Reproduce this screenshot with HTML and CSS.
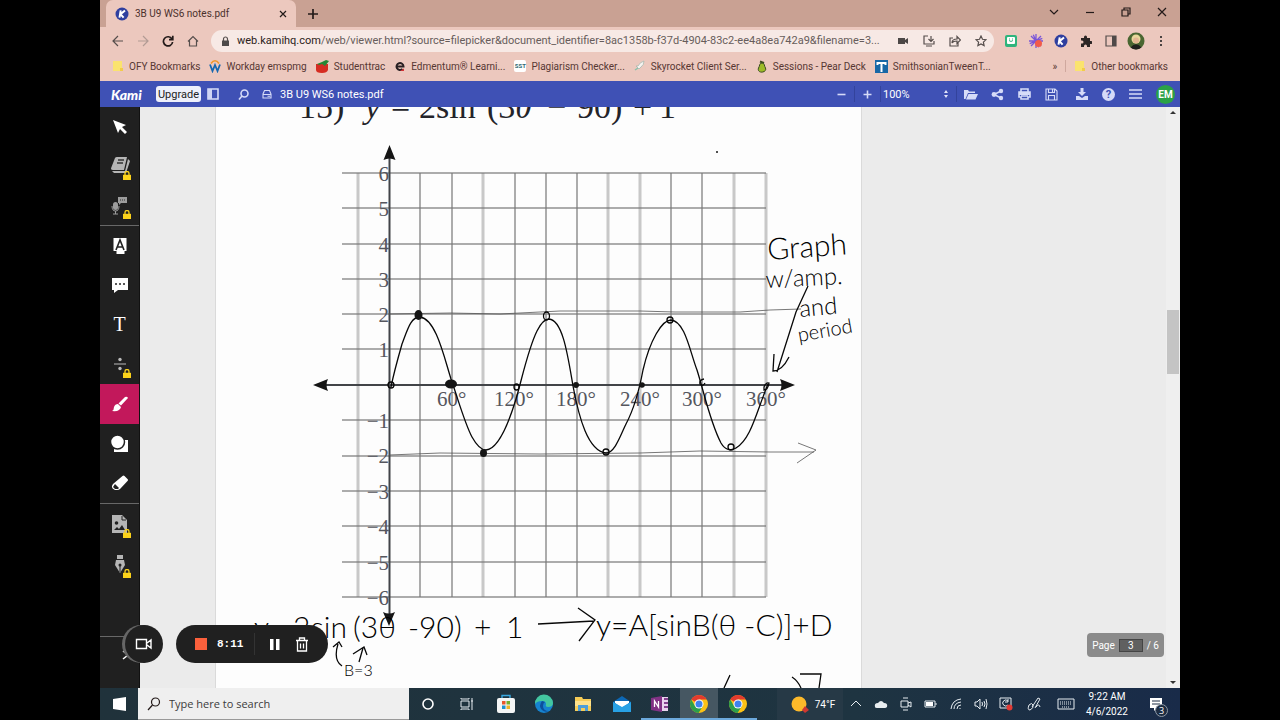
FILE: index.html
```html
<!DOCTYPE html>
<html lang="en">
<head>
<meta charset="utf-8">
<title>3B U9 WS6 notes.pdf</title>
<link rel="stylesheet" href="styles.css">
</head>
<body>
<svg class="defs" aria-hidden="true">
  <symbol id="lock" viewBox="0 0 8 9"><path d="M2 4V2.5a2 2 0 0 1 4 0V4" fill="none" stroke="#fbd21b" stroke-width="1.3"/><path d="M0 3.8h8V9H0z" fill="#fbd21b"/></symbol>
  <symbol id="kami" viewBox="0 0 14 14"><circle cx="7" cy="7" r="6.5" fill="#2f3f9f"/><path d="M5.7 3.3 4.5 10.7M10 3.5 5.5 7.2 8.6 10.6" fill="none" stroke="#fff" stroke-width="2"/></symbol>
  <symbol id="folder" viewBox="0 0 12 12"><path d="M1 1h9v7l1 3H1z" fill="#fbe36e"/><path d="M8 11V8h3v3z" fill="#f2cc4a"/></symbol>
  <symbol id="chrome" viewBox="0 0 20 20"><circle cx="10" cy="10" r="9" fill="#fbc116"/><path d="M10 10 2.2 5.5A9 9 0 0 1 17.8 5.5H10z" fill="#e33b2e"/><path d="M2.2 5.5A9 9 0 0 0 9.5 19L14 12 10 10 6 12z" fill="#2c9f4b"/><circle cx="10" cy="10" r="4.5" fill="#fff"/><circle cx="10" cy="10" r="3.5" fill="#3f82ee"/></symbol>
</svg>
<div class="screen">
  <header class="tabstrip">
    <div class="tab">
      <svg width="14" height="14"><use href="#kami"/></svg>
      <span class="tab-title">3B U9 WS6 notes.pdf</span>
      <button class="tab-close" aria-label="Close tab"><svg width="8" height="8" viewBox="0 0 8 8"><path d="M1 1l6 6M7 1 1 7" class="ln"/></svg></button>
    </div>
    <button class="newtab" aria-label="New tab"><svg width="12" height="12" viewBox="0 0 12 12"><path d="M6 1v10M1 6h10" class="ln thick"/></svg></button>
    <div class="winctl">
      <button aria-label="Search tabs"><svg width="10" height="10" viewBox="0 0 10 10"><path d="M1 3l4 4 4-4" class="ln"/></svg></button>
      <button aria-label="Minimize"><svg width="10" height="10" viewBox="0 0 10 10"><path d="M1 5.5h8" class="ln"/></svg></button>
      <button aria-label="Restore"><svg width="10" height="10" viewBox="0 0 10 10"><path d="M1 3h6v6H1zM3 3V1h6v6H7" class="ln"/></svg></button>
      <button aria-label="Close"><svg width="10" height="10" viewBox="0 0 10 10"><path d="M1 1l8 8M9 1 1 9" class="ln"/></svg></button>
    </div>
  </header>

  <nav class="toolbar">
    <div class="navbtns">
      <button aria-label="Back"><svg width="12" height="12" viewBox="0 0 12 12"><path d="M11 6H1M6 1 1 6l5 5" class="ln gray"/></svg></button>
      <button aria-label="Forward"><svg width="12" height="12" viewBox="0 0 12 12"><path d="M1 6h10M6 1l5 5-5 5" class="ln faded"/></svg></button>
      <button aria-label="Reload"><svg width="12" height="12" viewBox="0 0 12 12"><path d="M10 4A4.6 4.6 0 1 0 10.6 7M10.8.8V4.6H7" class="ln thick"/></svg></button>
      <button aria-label="Home"><svg width="12" height="12" viewBox="0 0 12 12"><path d="M1 6.5 6 1.5l5 5M2.500 5.500V11h7V5.500" class="ln gray"/></svg></button>
    </div>
    <div class="omnibox">
      <svg class="padlock" width="9" height="11" viewBox="0 0 9 11"><path d="M2.500 5V3a2 2 0 0 1 4 0v2" class="ln gray"/><path d="M1 4.500h7V10H1z" fill="#4d4a49"/></svg>
      <a class="url" href="#"><span class="host">web.kamihq.com</span>/web/viewer.html?source=filepicker&amp;document_identifier=8ac1358b-f37d-4904-83c2-ee4a8ea742a9&amp;filename=3...</a>
      <div class="omni-actions">
        <button aria-label="Camera"><svg width="12" height="10" viewBox="0 0 12 10"><path d="M1 2h7v2l3-2v6L8 6v2H1z" fill="#4c4746"/></svg></button>
        <button aria-label="Install"><svg width="12" height="12" viewBox="0 0 12 12"><path d="M5 1H1v8h10V6M3 11h6M8 1v5M5.500 4 8 6.500 10.500 4" class="ln gray"/></svg></button>
        <button aria-label="Share"><svg width="12" height="12" viewBox="0 0 12 12"><path d="M4 3H1v8h8V8M3 8c0-3 2-4 5-4V1.500L11.500 5 8 8.500V6C6 6 4 6 3 8z" class="ln gray"/></svg></button>
        <button aria-label="Bookmark"><svg width="12" height="12" viewBox="0 0 12 12"><path d="M6 1l1.500 3.300 3.500.4-2.600 2.400.7 3.500L6 8.900 2.900 10.600l.7-3.500L1 4.700l3.500-.4z" class="ln gray"/></svg></button>
      </div>
    </div>
    <div class="exts">
      <button aria-label="Bitmoji"><svg width="14" height="14" viewBox="0 0 14 14"><rect x="1" y="1" width="12" height="12" rx="2" fill="#2fb47c"/><rect x="3" y="3" width="8" height="7" rx="1" fill="#fff"/><path d="M5 6.500q2 2 4 0M5.500 4.500v1M8.500 4.500v1" fill="none" stroke="#2fb47c"/></svg></button>
      <button aria-label="Loom"><svg width="14" height="14" viewBox="0 0 14 14"><path d="M7 0v14M0 7h14M2 2l10 10M12 2 2 12M4.300.7l5.400 12.600M.7 9.700l12.600-5.400" stroke="#7a55d8" stroke-width="1.300"/><circle cx="9.500" cy="9.500" r="3.500" fill="#f25a49"/></svg></button>
      <button aria-label="Kami extension"><svg width="14" height="14"><use href="#kami"/></svg></button>
      <button aria-label="Extensions"><svg width="12" height="12" viewBox="0 0 12 12"><path d="M1 3h3V2a1.500 1.500 0 0 1 3 0v1h3v3h1a1.500 1.500 0 0 1 0 3h-1v3H7v-1a1.500 1.500 0 0 0-3 0v1H1V8.500h1a1.500 1.500 0 0 0 0-3H1z" fill="#2c2524"/></svg></button>
      <button aria-label="Side panel"><svg width="12" height="12" viewBox="0 0 12 12"><path d="M1 1h10v10H1z" class="ln gray"/><path d="M7 1h4v10H7z" fill="#4f4948"/></svg></button>
      <button aria-label="Profile"><svg width="18" height="18" viewBox="0 0 18 18"><circle cx="9" cy="9" r="8.500" fill="#4a6631"/><path d="M3.500 15.500Q9 9 14.500 15.500A8.500 8.500 0 0 1 3.500 15.500" fill="#20211d"/><circle cx="9" cy="7" r="4.500" fill="#e8d79b"/><circle cx="9" cy="8.500" r="3" fill="#e3b592"/></svg></button>
      <button aria-label="Menu"><svg width="4" height="12" viewBox="0 0 4 12"><path d="M1 1h2v2H1zM1 5h2v2H1zM1 9h2v2H1z" fill="#4b4342"/></svg></button>
    </div>
  </nav>

  <nav class="bookmarks">
    <a href="#"><svg width="12" height="12"><use href="#folder"/></svg>OFY Bookmarks</a>
    <a href="#"><svg width="12" height="14" viewBox="0 0 12 14"><path d="M2 4.500Q6-1 10 4.500" fill="none" stroke="#f2982b" stroke-width="1.600"/><path d="M1 5.500 3.500 12 6 6l2.500 6L11 5.500" fill="none" stroke="#1768b0" stroke-width="1.800"/></svg>Workday emspmg</a>
    <a href="#"><svg width="13" height="13" viewBox="0 0 13 13"><path d="M0 4h12v6q-1 3-6 3-6 0-6-3z" fill="#d62c22"/><path d="M1 4 6 2 10 0l3 1-4 5-3-2-3 1z" fill="#268734"/></svg>Studenttrac</a>
    <a href="#"><svg width="12" height="12" viewBox="0 0 12 12"><path d="M2.500 6.500H9.500A3.500 3.500 0 1 0 8.500 9" fill="none" stroke="#292023" stroke-width="2"/><path d="M6 11h4V8.500z" fill="#d43235"/></svg>Edmentum® Learni...</a>
    <a href="#"><span class="sst">SST</span>Plagiarism Checker...</a>
    <a href="#"><svg width="12" height="12" viewBox="0 0 12 12"><path d="M4 6q2-4 6-5 0 4-3 6l-2 2-3-3z" fill="#f6f3f0" stroke="#a8b8ae" stroke-width=".8"/><path d="M1 10l3-2" stroke="#8bc2ac" stroke-width="1.500"/></svg>Skyrocket Client Ser...</a>
    <a href="#"><svg width="12" height="13" viewBox="0 0 12 13"><path d="M4 1.500l4 1.500" stroke="#3c4b20" stroke-width="2"/><path d="M6 3c3 0 2 3 3.500 5 2 5-9 6-7 0C4 6 3 3 6 3z" fill="#9dbb28" stroke="#3c4b20"/></svg>Sessions - Pear Deck</a>
    <a href="#"><svg width="13" height="13" viewBox="0 0 13 13"><path d="M0 0h13v13H0z" fill="#1767a6"/><path d="M2 3h9M6.500 3v9M2.500 2v3M10.500 2v3" stroke="#fff" stroke-width="2"/></svg>SmithsonianTweenT...</a>
    <div class="bookmarks-end"><button aria-label="More bookmarks">»</button><a href="#"><svg width="12" height="12"><use href="#folder"/></svg>Other bookmarks</a></div>
  </nav>

  <header class="kamibar">
    <a class="brand" href="#">Kami</a>
    <button class="upgrade">Upgrade</button>
    <button class="panel" aria-label="Toggle panel"><svg width="12" height="12" viewBox="0 0 12 12"><path d="M1 1h10v10H1z" class="kln"/><path d="M1 1h4v10H1z" fill="#cfd5f5"/></svg></button>
    <button class="find" aria-label="Find"><svg width="11" height="11" viewBox="0 0 11 11"><circle cx="6.500" cy="4.500" r="3.500" class="kln"/><path d="M4 7 1 10.500" class="kln"/></svg></button>
    <div class="doc"><svg width="10" height="10" viewBox="0 0 10 10"><path d="M1 5 2.500 1.500h5L9 5v4H1zM1 5.500h8M5.500 7.300H8" class="kln thin"/></svg><span>3B U9 WS6 notes.pdf</span></div>
    <div class="zoomctl">
      <button aria-label="Zoom out"><svg width="9" height="9" viewBox="0 0 9 9"><path d="M.5 4.500h8" class="kln"/></svg></button>
      <button aria-label="Zoom in"><svg width="9" height="9" viewBox="0 0 9 9"><path d="M.5 4.500h8M4.500.5v8" class="kln"/></svg></button>
      <label class="level"><select aria-label="Zoom level"><option>100%</option></select><svg width="6" height="8" viewBox="0 0 6 8"><path d="M3 0l2 3H1zM3 8l2-3H1z" fill="#e2e5fa"/></svg></label>
    </div>
    <div class="kactions">
      <button aria-label="Open"><svg width="16" height="13" viewBox="0 0 16 13"><path d="M1 11V2h4l1 1.500h6V5H5L2.500 11zM5.500 6H15l-2.500 5.500H3z" fill="#d6dbf8"/></svg></button>
      <button aria-label="Share"><svg width="13" height="13" viewBox="0 0 13 13"><path d="M10 3 3 6.500 10 10" class="kln"/><g fill="#d6dbf8"><circle cx="10" cy="3" r="2.200"/><circle cx="3" cy="6.500" r="2.400"/><circle cx="10" cy="10" r="2.200"/></g></svg></button>
      <button aria-label="Print"><svg width="13" height="12" viewBox="0 0 13 12"><path d="M3 4V1h7v3M1 9V4h11v5h-2v2H3V9zM3 8h7" class="kln"/><path d="M1 4h11v3H1z" fill="#d6dbf8"/></svg></button>
      <button aria-label="Save"><svg width="13" height="13" viewBox="0 0 13 13"><path d="M1 1h9l2 2v9H1zM3.500 1v3.500h6V1M3.500 12V7.500h6V12M7.500 1.500V4" class="kln thin"/></svg></button>
      <button class="spaced" aria-label="Download"><svg width="14" height="13" viewBox="0 0 14 13"><path d="M5.500 0h3v4H11L7 8 3 4h2.500zM1 8h3l3 2 3-2h3v4H1z" fill="#d6dbf8"/></svg></button>
      <button aria-label="Help"><span class="help">?</span></button>
      <button aria-label="Menu"><svg width="13" height="12" viewBox="0 0 13 12"><path d="M0 2h13M0 6h13M0 10h13" class="kln"/></svg></button>
    </div>
    <button class="avatar">EM</button>
  </header>

  <main class="viewer">
    <aside class="tools">
      <div class="group three">
        <button aria-label="Select"><svg width="16" height="16" viewBox="0 0 16 16"><path d="M1 1l13 5-4 2 5 5-2 2-5-5-2 4z" fill="#fff"/></svg></button>
        <button aria-label="Dictionary" class="locked"><svg width="20" height="19" viewBox="0 0 20 19"><path d="M5 2q.5-1 2-1h10l-3 13H3Q0 14 1.500 11zM18 3l2 2-4 12H4l-2-2h13z" fill="#b5b5b5"/><path d="M8 4h6M7 7h6" stroke="#333" stroke-width="1.300"/></svg><svg class="lk"><use href="#lock"/></svg></button>
        <button aria-label="Speech" class="locked"><svg width="18" height="20" viewBox="0 0 18 20"><rect x="2" y="7" width="5" height="8" rx="2.500" fill="#9d9d9d"/><path d="M1 11q0 5 3.500 5T8 11M4.500 16v3M2 19h5" stroke="#9d9d9d" fill="none"/><path d="M7 2h9v6h-6l-2 2V8H7z" fill="#9d9d9d"/><path d="M9 5h6" stroke="#333" stroke-dasharray="1 1"/></svg><svg class="lk"><use href="#lock"/></svg></button>
      </div>
      <div class="group seven">
        <button aria-label="Markup"><svg width="16" height="18" viewBox="0 0 16 18"><path d="M1.500 1h13v13h-2v3h-8v-3h-3z" fill="#fff"/><path d="M4 13 8 3l4 10M5.500 10h5" stroke="#222" fill="none" stroke-width="1.600"/></svg></button>
        <button aria-label="Comment"><svg width="18" height="16" viewBox="0 0 18 16"><path d="M1 1h16v12H7l-4 3v-3H1z" fill="#fff"/><path d="M4 7h2M8 7h2M12 7h2" stroke="#222" stroke-width="1.300"/></svg></button>
        <button aria-label="Text" class="tee">T</button>
        <button aria-label="Equation" class="locked"><svg width="14" height="16" viewBox="0 0 14 16"><path d="M1 8h12" stroke="#bbb"/><circle cx="7" cy="3.500" r="1.700" fill="#bbb"/><circle cx="7" cy="12.500" r="1.700" fill="#bbb"/></svg><svg class="lk"><use href="#lock"/></svg></button>
        <button aria-label="Drawing" class="on"><svg width="18" height="18" viewBox="0 0 18 18"><path d="M7.500 8.500 14 2q2-1 3 1L10 10.500" fill="#fff"/><path d="M7 9l3 3q-1 5-9 4 2-1 2-4 1-3 4-3z" fill="#fff"/></svg></button>
        <button aria-label="Shapes"><svg width="19" height="18" viewBox="0 0 19 18"><path d="M4 5h14v12H4z" fill="#fff"/><circle cx="7.500" cy="7" r="7" fill="#fff" stroke="#222" stroke-width="1.500"/></svg></button>
        <button aria-label="Eraser"><svg width="18" height="16" viewBox="0 0 18 16"><path d="M11.500 1q1-1 2 0l3 3q1 1 0 2L9 14q-1 1-3 1H4q-5-2-2-6z" fill="#fff"/><path d="M4 9l4 4-1 1H4l-2-2z" fill="#222"/></svg></button>
      </div>
      <div class="group rest">
        <button aria-label="Media" class="locked"><svg width="17" height="20" viewBox="0 0 17 20"><path d="M1 1h10l5 5v13H1z" fill="#b5b5b5"/><circle cx="5.500" cy="9" r="1.800" fill="#222"/><path d="M3 16l3-3 2 2 3-4 3 5z" fill="#222"/><path d="M11 2v4h4" stroke="#222" fill="none"/></svg><svg class="lk"><use href="#lock"/></svg></button>
        <button aria-label="Signature" class="locked"><svg width="12" height="20" viewBox="0 0 12 20"><path d="M3 1h6v4H3zM2 6h8l1 5-5 8-5-8z" fill="#b5b5b5"/><circle cx="6" cy="11" r="1.500" fill="#222"/><path d="M6 12v6" stroke="#222"/></svg><svg class="lk"><use href="#lock"/></svg></button>
      </div>
      <button class="expand" aria-label="Expand"><svg width="8" height="10" viewBox="0 0 8 10"><path d="M1 1l5 4-5 4" fill="none" stroke="#fff" stroke-width="1.500"/></svg></button>
    </aside>

    <section class="desk">
      <article class="sheet">
        <svg class="ink" viewBox="216 107 645 581" preserveAspectRatio="xMinYMin slice">
          <g class="print">
            <text y="118"><tspan x="299">15)</tspan><tspan x="365" class="it">y</tspan><tspan x="391">=</tspan><tspan x="419">2sin</tspan><tspan x="487">(3</tspan><tspan class="it">θ</tspan><tspan x="547">−</tspan><tspan x="577">90)</tspan><tspan x="633">+</tspan><tspan x="659">1</tspan></text>
          </g>
          <g class="grid">
            <path d="M342 173H766M342 208H766M342 244H766M342 279H766M342 314H766M342 349H766M342 420H766M342 456H766M342 491H766M342 526H766M342 562H766M342 597H766"/>
            <path d="M420 173V597M452 173V597M515 173V597M546 173V597M577 173V597M671 173V597M702 173V597"/>
            <path class="wide" d="M358 173V597M483 173V597M608 173V597M640 173V597M734 173V597M766 173V597"/>
          </g>
          <g class="scale end">
            <text x="389" y="181">6</text><text x="389" y="216">5</text><text x="389" y="252">4</text><text x="389" y="287">3</text><text x="389" y="322">2</text><text x="389" y="357">1</text>
            <text x="389" y="428">−1</text><text x="389" y="463">−2</text><text x="389" y="499">−3</text><text x="389" y="534">−4</text><text x="389" y="570">−5</text><text x="389" y="605">−6</text>
          </g>
          <g class="scale">
            <text x="437" y="406">60°</text><text x="494" y="406">120°</text><text x="556" y="406">180°</text><text x="620" y="406">240°</text><text x="682" y="406">300°</text><text x="746" y="406">360°</text>
          </g>
          <path class="axis" d="M389.500 156V620M326 385H784"/>
          <path class="tips" d="M389.500 145l-6 15q6-3 12 0zM389 626l-6-14q6 3 12 0zM313 385l15-6q-3 6 0 12zM795 385l-15-6q3 6 0 12z"/>
          <path class="faint" d="M389 314 450 313 500 314 560 311 640 311 675 312 740 312 770 310 801 309M389 455 440 453 540 454 640 453 700 451 770 452 814 452M798 443l18 7-19 13"/>
          <path class="pen" d="M391 387C394 372 398 358 402 344 408 328 411 317 420 317 436 319 444 357 451 379 459 402 465 424 472 437 477 446 481 450 486 450 498 449 509 422 516 399 522 379 528 349 537 331 541 323 545 319 549 319 563 320 568 357 573 386 579 418 588 451 606 453 615 453 621 434 626 424 635 407 640 386 643 370 650 340 662 320 671 320 685 321 690 352 697 370 704 392 710 422 721 443 725 450 731 451 736 448 751 439 756 413 768 384"/>
          <g class="dots"><ellipse cx="418.500" cy="315" rx="4" ry="5"/><ellipse cx="451" cy="384" rx="6" ry="4.500"/><ellipse cx="483.500" cy="453" rx="3.500" ry="4"/><circle cx="576" cy="385" r="3"/><circle cx="642" cy="385" r="2.800"/><circle cx="717" cy="152" r="1"/></g>
          <path class="pen" d="M388 385a3 3 0 1 0 6 0a3 3 0 1 0-6 0M543.500 316a3 4 0 1 0 6 0a3 4 0 1 0-6 0M514 387a2.500 3 0 1 0 5 0a2.500 3 0 1 0-5 0M603 452a3 3 0 1 0 6 0a3 3 0 1 0-6 0M667 320a3 3 0 1 0 6 0a3 3 0 1 0-6 0M704 379q-5 1-4 5 3 3 5-1M728 447a3 3 0 1 0 6 0a3 3 0 1 0-6 0M764 387q2-5 5-4-1 7-5 7z"/>
          <g class="hand">
            <text x="768" y="260" class="h30" transform="rotate(-4 768 260)">Graph</text>
            <text x="766" y="288" class="h24" transform="rotate(-3 766 288)">w/amp.</text>
            <text x="800" y="317" class="h24" transform="rotate(-5 800 317)">and</text>
            <text x="799" y="342" class="h20" transform="rotate(-10 799 342)">period</text>
            <text y="638" class="h30"><tspan x="254">y</tspan><tspan x="272">=</tspan><tspan x="293">2</tspan><tspan x="311">sin</tspan><tspan x="353">(3θ</tspan><tspan x="408">-90)</tspan><tspan x="474">+</tspan><tspan x="506">1</tspan></text>
            <text x="596" y="636" class="h30">y=A[sinB(θ -C)]+D</text>
            <text x="344" y="676" class="h16">B=3</text>
          </g>
          <path class="pen" d="M808 286 796 312 777 372M774 354l-1 17q9 0 16-14M538 624l56-3M578 608l17 12-16 21M342 666q-9-6-4-22M333 647l6-5 3 5M359 662l4-14M353 654l11-7 3 8M730 675l-6 13M792 677q6 4 9 11M800 674h21l-2 14"/>
        </svg>
      </article>
      <form class="pager"><label for="pageno">Page</label><input id="pageno" type="text" value="3"><span>/ 6</span></form>
    </section>
    <div class="scroll"><i class="up"></i><i class="thumb"></i><i class="down"></i></div>
  </main>

  <div class="recorder">
    <button class="cam" aria-label="Camera"><svg width="18" height="14" viewBox="0 0 18 14"><path d="M1.500 2.500h10v9h-10zM12 6l4-3v8l-4-3" fill="none" stroke="#fff" stroke-width="1.400"/></svg></button>
    <div class="pill">
      <button class="stop" aria-label="Stop"><i></i></button><time>8:11</time>
      <button class="pause" aria-label="Pause"><svg width="10" height="11" viewBox="0 0 10 11"><path d="M0 0h3.500v11H0zM6 0h3.500v11H6z" fill="#fff"/></svg></button>
      <button aria-label="Delete"><svg width="14" height="15" viewBox="0 0 14 15"><path d="M1 3.500h12M4.500 3V1h5v2M2.500 4v10h9V4M5.500 6.500v5M8.500 6.500v5" fill="none" stroke="#fff" stroke-width="1.300"/></svg></button>
    </div>
  </div>

  <footer class="taskbar">
    <button class="start" aria-label="Start"><svg width="13" height="14" viewBox="0 0 13 14"><path d="M0 2 13 0v14L0 12z" fill="#fff"/></svg></button>
    <label class="search"><svg width="14" height="14" viewBox="0 0 14 14"><circle cx="8.500" cy="5" r="4" class="ln"/><path d="M5.500 8 1 13" class="ln"/></svg><input type="text" placeholder="Type here to search"></label>
    <div class="apps">
      <button aria-label="Cortana"><svg width="14" height="14" viewBox="0 0 14 14"><circle cx="7" cy="7" r="5" fill="none" stroke="#fff" stroke-width="1.600"/></svg></button>
      <button aria-label="Task view"><svg width="14" height="14" viewBox="0 0 14 14"><path d="M1 4h8v6H1zM1 1v1h8V1M1 13v-1h8v1M12 1v12M11 4h2" class="tl"/></svg></button>
      <button aria-label="Store"><svg width="20" height="20" viewBox="0 0 20 20"><path d="M6 4V1.500h8V4" fill="none" stroke="#39a8e0" stroke-width="1.400"/><rect x="1" y="4" width="18" height="15" rx="2" fill="#f4f5f5"/><path d="M6 7h3.500v3.500H6z" fill="#e9552b"/><path d="M10.500 7H14v3.500h-3.500z" fill="#75ad2f"/><path d="M6 11.500h3.500V15H6z" fill="#1e8fd0"/><path d="M10.500 11.500H14V15h-3.500z" fill="#efb52b"/></svg></button>
      <button aria-label="Edge"><svg width="20" height="20" viewBox="0 0 20 20"><circle cx="10" cy="10" r="9" fill="#1683cf"/><path d="M1 10A9 9 0 0 1 19 9q0 4-5 4-3 0-2-3 0-3-4-3-5 0-7 3" fill="#43c6a0"/><path d="M8 7q-4 5 0 9 3 3 7 1-6 0-6-5 0-3 2-4z" fill="#0d4f9c"/></svg></button>
      <button aria-label="File Explorer"><svg width="18" height="16" viewBox="0 0 18 16"><path d="M1 1h7l1 2h8v12H1z" fill="#f6cc57"/><path d="M1 5h16v5H1z" fill="#fde18b"/><path d="M4 15V9h10v6h-3v-3H7v3z" fill="#4d9ed8"/></svg></button>
      <button aria-label="Mail"><svg width="20" height="18" viewBox="0 0 20 18"><path d="M1 7 10 1l9 6v10H1z" fill="#0d68b5"/><path d="M3 6h14v2l-7 5-7-5z" fill="#fff"/><path d="M1 7l9 5 9-5v10H1z" fill="#28a1e5"/></svg></button>
      <button class="open" aria-label="OneNote"><svg width="18" height="16" viewBox="0 0 18 16"><path d="M8 1h9v14H8z" fill="#e9d4ee"/><path d="M13 3h4M13 7h4M13 11h4" stroke="#85418f" stroke-width="2"/><path d="M0 2 11 0v16L0 14z" fill="#813284"/><path d="M3.500 11V5l4 6V5" fill="none" stroke="#fff" stroke-width="1.300"/></svg></button>
      <button class="open active" aria-label="Chrome"><svg width="20" height="20"><use href="#chrome"/></svg></button>
      <button class="open" aria-label="Chrome second profile"><svg width="20" height="20"><use href="#chrome"/></svg></button>
    </div>
    <button class="weather"><svg width="18" height="18" viewBox="0 0 18 18"><circle cx="8" cy="9" r="7.500" fill="#fdb92a"/><path d="M14 11l4 4-4 3-3-3z" fill="#ce3731"/></svg>74°F</button>
    <div class="tray">
      <button aria-label="Hidden icons"><svg width="12" height="12" viewBox="0 0 12 12"><path d="M1 8l5-5 5 5" class="tl"/></svg></button>
      <button aria-label="OneDrive"><svg width="14" height="10" viewBox="0 0 14 10"><path d="M1 8q-1-4 3-4 3-4 6 0 4 0 3 4-1 1-2 1H3Q1 9 1 8z" fill="#e8edf0"/></svg></button>
      <button aria-label="Meet now"><svg width="12" height="14" viewBox="0 0 12 14"><path d="M1 4h7v6H1zM8 6l3-1v5L8 8M3 1h5M3 13h5" class="tl"/></svg></button>
      <button aria-label="Battery"><svg width="13" height="10" viewBox="0 0 13 10"><path d="M1 2h10v6H1zM12 4v2" class="tl"/><path d="M2 3h7v4H2z" fill="#fff"/></svg></button>
      <button aria-label="Wi-Fi"><svg width="12" height="12" viewBox="0 0 12 12"><path d="M1 11Q2 2 11 1M4 11q0-6 7-7M7 11q0-4 4-4M10 11v-1" class="tl"/></svg></button>
      <button aria-label="Volume"><svg width="14" height="12" viewBox="0 0 14 12"><path d="M1 4h2l3-3v10L3 8H1zM8 4q1 2 0 4M10 3q2 3 0 6M12 1q2 5 0 10" class="tl"/></svg></button>
      <button aria-label="Update"><svg width="14" height="14" viewBox="0 0 14 14"><path d="M1 1h11v10H1zM9 4a3 3 0 1 0 0 4M9 2v3H6" class="tl"/><circle cx="10.500" cy="10.500" r="3" fill="#e23b35"/></svg></button>
      <button class="pen-btn" aria-label="Pen"><svg width="14" height="14" viewBox="0 0 14 14"><path d="M2 8q3-3 4 0t-3 5q-3 0-1-5M5 10l6-9 2 1-5 9M9 10q3-4 4 0" class="tl"/></svg></button>
      <button class="kbd" aria-label="Keyboard"><svg width="18" height="12" viewBox="0 0 18 12"><path d="M1 1h16v10H1z" class="tl"/><path d="M3 4h12M3 6h12M5 9h8" class="tl" stroke-dasharray="1 1"/></svg></button>
    </div>
    <div class="clock"><time>9:22 AM</time><time>4/6/2022</time></div>
    <button class="notes" aria-label="3 notifications"><svg width="14" height="14" viewBox="0 0 14 14"><path d="M1 1h12v10H8l-3 3v-3H1z" fill="#fff"/><path d="M3 4h8M3 7h8" stroke="#1a2c45"/></svg><span>3</span></button>
  </footer>
</div>
</body>
</html>
```
FILE: styles.css
```css
* { box-sizing: border-box; }
body { margin: 0; background: #000; font-family: "Open Sans", "Noto Sans", sans-serif; font-size: 11px; }
button { margin: 0; padding: 0; border: 0; background: none; font: inherit; color: inherit; display: flex; align-items: center; justify-content: center; }
a { color: inherit; text-decoration: none; }
svg { display: block; flex: none; }
.defs { position: absolute; width: 0; height: 0; }
.ln { fill: none; stroke: #231a19; stroke-width: 1.2; }
.ln.thick { stroke-width: 1.7; }
.ln.gray { stroke: #564e4c; }
.ln.faded { stroke: #b29b94; }
.kln { fill: none; stroke: #d6dbf8; stroke-width: 1.6; }
.kln.thin { stroke-width: 1.1; }
.tl { fill: none; stroke: #e6ecf0; stroke-width: 1; }
.screen { position: relative; margin: 0 100px; height: 100vh; display: flex; flex-direction: column; overflow: hidden; }

.tabstrip { flex: 0 0 27px; display: flex; align-items: stretch; background: #c9a193; padding-left: 6px; }
.tab { flex: 0 0 190px; display: flex; align-items: center; gap: 6px; padding: 0 9px; background: #ecc8be; border-radius: 7px 7px 0 0; color: #4b302c; }
.tab-title { flex: 1; white-space: nowrap; font: 10px Roboto, sans-serif; }
.newtab { width: 34px; }
.winctl { margin-left: auto; display: flex; }
.winctl button { width: 36px; padding-bottom: 4px; }

.toolbar { flex: 0 0 28px; display: flex; align-items: center; background: #ecc8be; padding: 0 7px 0 5px; }
.navbtns { display: flex; margin-right: 6px; }
.navbtns button, .exts button { width: 25px; height: 24px; }
.omnibox { flex: 1; min-width: 0; height: 22px; display: flex; align-items: center; background: #f7e9e5; border-radius: 11px; padding-left: 10px; }
.url { flex: 1; min-width: 0; margin-left: 7px; white-space: nowrap; font: 11px/18px Roboto, sans-serif; color: #675d5b; }
.host { color: #2b2220; }
.omni-actions { display: flex; }
.omni-actions button { width: 26px; height: 22px; }
.exts { display: flex; margin-left: 4px; }

.bookmarks { flex: 0 0 26px; display: flex; align-items: center; gap: 9px; background: #ecc8be; padding: 0 12px 4px; font: 10px Roboto, sans-serif; color: #573733; white-space: nowrap; }
.bookmarks a { display: flex; align-items: center; gap: 5px; }
.bookmarks-end { margin-left: auto; display: flex; align-items: center; gap: 8px; }
.bookmarks-end a { border-left: 1px solid #cfa89e; padding-left: 8px; }
.sst { width: 12px; height: 12px; line-height: 12px; background: #fff; border-radius: 2px; font-size: 6px; font-weight: bold; text-align: center; color: #2e6a73; }

.kamibar { flex: 0 0 26px; display: flex; align-items: center; background: #3f51b5; color: #fff; padding: 0 5px 0 11px; font-family: Roboto, "Noto Sans", sans-serif; }
.brand { flex: 0 0 45px; font: italic 900 14px Lato, sans-serif; }
.upgrade { width: 45px; height: 16px; border-radius: 3px; background: #eef0fb; color: #222; }
.panel { width: 24px; }
.find { width: 37px; }
.doc { display: flex; align-items: center; gap: 8px; white-space: nowrap; }
.zoomctl { margin-left: auto; display: flex; height: 16px; }
.zoomctl button { width: 26px; border-right: 1px solid #33439c; }
.level { width: 76px; display: flex; align-items: center; padding: 0 7px 0 2px; border-right: 1px solid #33439c; }
.level select { flex: 1; min-width: 0; appearance: none; border: 0; padding: 0; background: none; color: #fff; font: 11px Roboto, sans-serif; }
.kactions { display: flex; }
.kactions button { width: 27px; height: 22px; }
.kactions .spaced { margin-left: 3px; }
.help { width: 13px; height: 13px; line-height: 13px; border-radius: 50%; background: #d6dbf8; color: #3f51b5; font-weight: bold; }
.avatar { width: 19px; height: 19px; margin-left: 7px; border-radius: 50%; background: #2aa147; font-weight: bold; font-size: 10px; }

.viewer { flex: 1; min-height: 0; display: flex; background: #ebebeb; }
.tools { flex: 0 0 40px; display: flex; flex-direction: column; background: #202020; border-right: 1px solid #111; overflow: hidden; }
.group { display: grid; grid-auto-rows: 1fr; border-bottom: 1px solid #686868; }
.three { flex: 0 0 119px; }
.seven { flex: 0 0 278px; }
.rest { flex: 0 0 133px; padding-bottom: 52px; }
.tools button { position: relative; }
.tools .locked { color: #b5b5b5; }
.lk { position: absolute; right: 8px; bottom: 6px; width: 8px; height: 9px; }
.tools .on { background: #c2185b; }
.tools .tee { font: 20px "Liberation Serif", serif; color: #fff; }
.tools .expand { height: 36px; padding-left: 12px; }
.desk { position: relative; flex: 1; min-width: 0; display: flex; padding-left: 75px; overflow: hidden; }
.sheet { flex: 0 0 647px; background: #fdfdfd; border: solid #dadada; border-width: 0 1px; overflow: hidden; }
.ink { width: 100%; height: 100%; }
.print text { font: 34px "Liberation Serif", serif; fill: #24242a; }
.print .it { font-style: italic; }
.grid path { fill: none; stroke: #777; stroke-opacity: .6; stroke-width: 2; }
.grid .wide { stroke-opacity: .4; stroke-width: 3; }
.scale text { font: 21px "Liberation Serif", serif; fill: #55565e; }
.end text { text-anchor: end; }
.axis { stroke: #424448; stroke-width: 2; }
.tips, .dots { fill: #151515; }
.faint { fill: none; stroke: #555; stroke-width: .8; }
.pen { fill: none; stroke: #080808; stroke-width: 1.3; }
.hand text { font-family: Lato, "Open Sans", sans-serif; font-weight: 300; fill: #000; }
.hand .h30 { font-size: 30px; }
.hand .h24 { font-size: 24px; }
.hand .h20 { font-size: 20px; }
.hand .h16 { font-size: 16px; }
.pager { position: absolute; right: 2px; bottom: 31px; display: flex; align-items: center; gap: 4px; height: 24px; margin: 0; padding: 0 5px; border-radius: 4px; background: #8b8b8b; color: #fff; font: 10px Roboto, sans-serif; }
.pager input { width: 24px; height: 13px; padding: 0; border: 1px solid #444; background: #606060; color: #fff; font: inherit; text-align: center; }
.scroll { flex: 0 0 14px; display: flex; flex-direction: column; align-items: center; background: #efefef; padding: 4px 0; }
.up, .down { border: 3px solid transparent; }
.up { border-bottom-color: #333; border-top: 0; margin-bottom: 196px; }
.down { border-top-color: #333; border-bottom: 0; margin-top: auto; }
.thumb { width: 12px; height: 64px; background: #c4c4c4; }

.recorder { position: absolute; left: 25px; bottom: 57px; display: flex; gap: 13px; }
.cam { width: 38px; height: 38px; border-radius: 50%; background: #202020; box-shadow: -3px 0 0 #666; }
.pill { width: 152px; height: 38px; display: flex; align-items: center; border-radius: 19px; background: #202020; color: #fff; padding-left: 19px; }
.stop i { width: 12px; height: 12px; background: #fb603c; }
.pill time { width: 38px; height: 22px; margin: 0 10px; border-right: 1px solid #333; font: bold 11px/22px "Liberation Mono", monospace; }
.pause { width: 20px; margin-right: 10px; }

.taskbar { flex: 0 0 32px; display: flex; background: linear-gradient(90deg, #20323b, #1e3441 70%, #192b49); color: #fff; }
.start { width: 38px; }
.search { flex: 0 1 271px; display: flex; align-items: center; gap: 8px; padding: 0 9px; background: #efefef; border-bottom: 1px solid #999; }
.search input { flex: 1; min-width: 0; border: 0; padding: 0; background: none; font: 11px "Open Sans", sans-serif; }
.search input::placeholder { color: #3c3c3c; opacity: 1; }
.apps { flex: 0 0 348px; display: grid; grid-template-columns: repeat(9, 1fr); }
.open { border-bottom: 2px solid #6ca9dc; border-top: 2px solid transparent; }
.active { background: #465762; }
.weather { flex: 0 0 66px; margin-left: auto; gap: 6px; padding-left: 6px; background: #263946; font: 10px Roboto, sans-serif; }
.tray { display: flex; }
.tray button { width: 25px; }
.tray .pen-btn { width: 32px; }
.tray .kbd { width: 32px; }
.clock { flex: 0 0 50px; display: flex; flex-direction: column; justify-content: center; align-items: center; font: 10px/15px Roboto, sans-serif; }
.notes { position: relative; width: 48px; }
.notes span { position: absolute; right: 12px; bottom: 3px; width: 13px; height: 13px; border: 1px solid #8d98a5; border-radius: 50%; background: #1c2c42; font-size: 9px; line-height: 11px; }
```
